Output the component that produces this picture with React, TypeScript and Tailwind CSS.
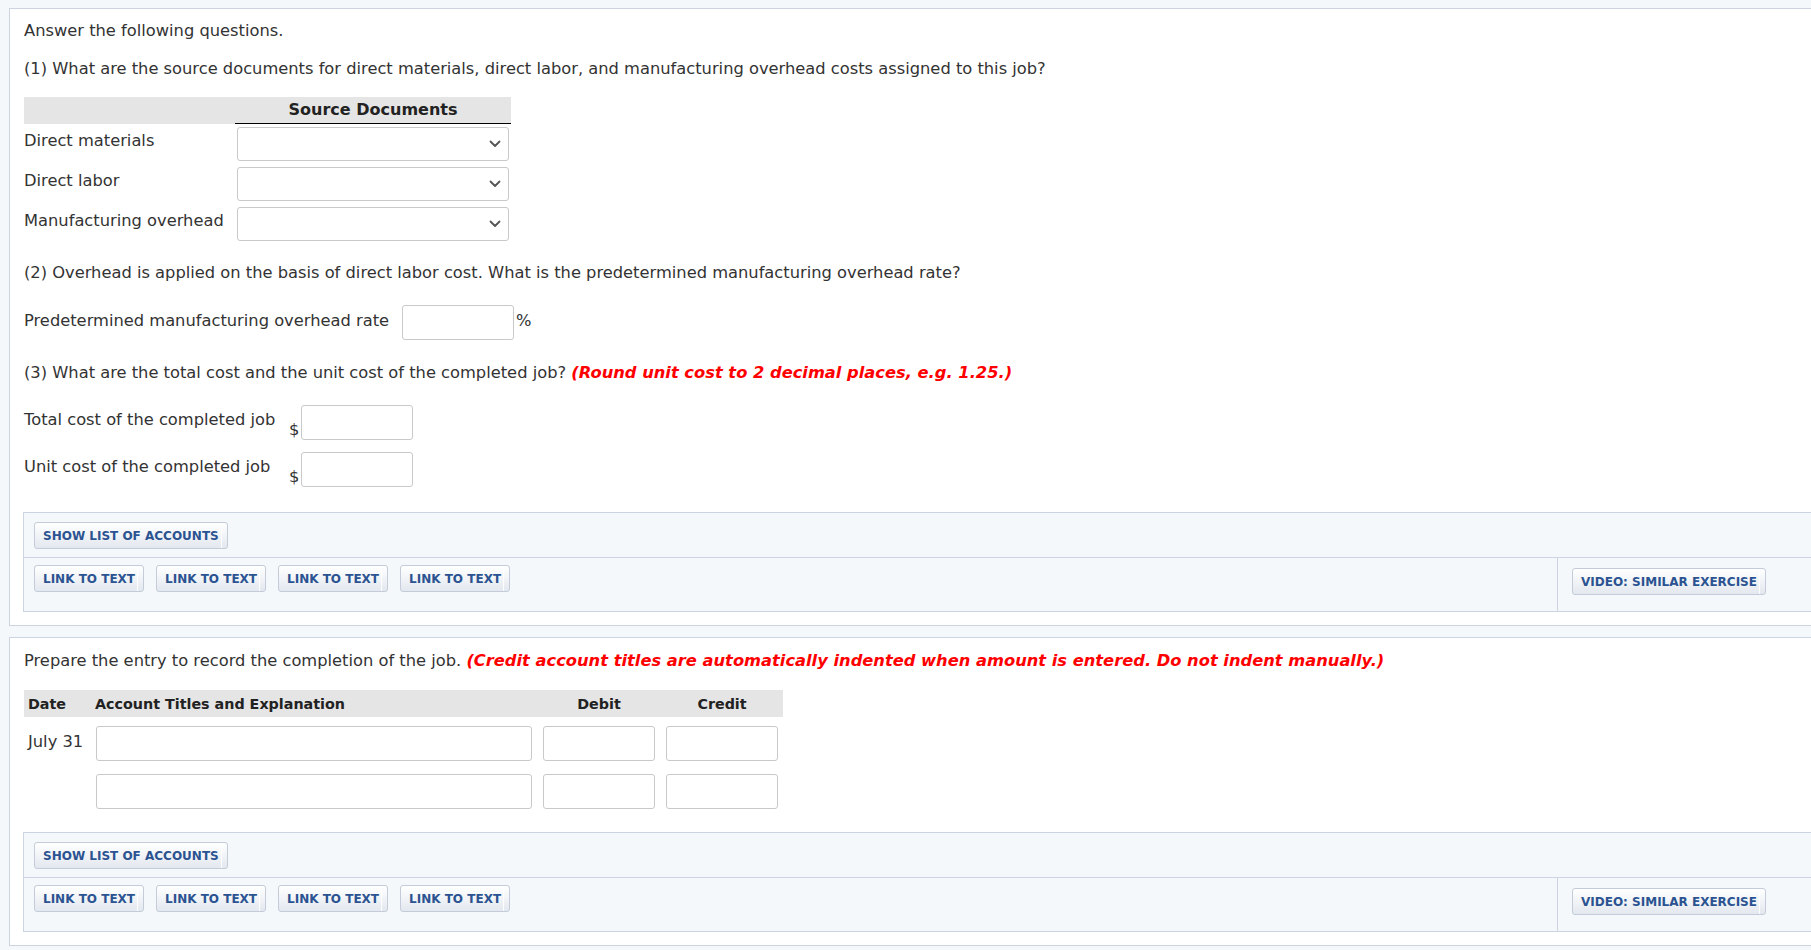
import React from 'react';

const Btn: React.FC<{ label: string }> = ({ label }) => (
  <button
    type="button"
    className="relative h-[27px] shrink-0 rounded-[3px] border border-[#c3ccd8] bg-linear-to-b from-white to-[#e3e8ef] px-[8px] text-[12px] font-bold uppercase leading-none text-[#2b5391]"
  >
    {label}
    <span className="absolute bottom-0 right-[5px] top-0 w-px bg-white/90" />
  </button>
);

const Toolbar: React.FC = () => (
  <div className="ml-[-1px] border border-[#cbd4e0] bg-[#f5f8fb]">
    <div className="h-[44px] pl-[10px] pt-[9px]">
      <Btn label="Show List of Accounts" />
    </div>
    <div className="flex h-[54px] border-t border-[#cbd4e0]">
      <div className="flex w-[1533px] gap-[12px] pl-[10px] pt-[7px]">
        <Btn label="Link to Text" />
        <Btn label="Link to Text" />
        <Btn label="Link to Text" />
        <Btn label="Link to Text" />
      </div>
      <div className="border-l border-[#cbd4e0] pl-[14px] pt-[10px]">
        <Btn label="Video: Similar Exercise" />
      </div>
    </div>
  </div>
);

const Chevron = () => (
  <svg width="12" height="8" viewBox="0 0 12 8" fill="none">
    <path d="M1.5 1.5 L6 6 L10.5 1.5" stroke="#555" strokeWidth="1.8" strokeLinecap="round" strokeLinejoin="round" />
  </svg>
);

const SelectBox: React.FC = () => (
  <div className="flex h-[34px] w-[272px] items-center justify-end rounded-[3px] border border-[#c9c9c9] bg-white pr-[7px]">
    <Chevron />
  </div>
);

const Input: React.FC<{ className: string }> = ({ className }) => (
  <input type="text" className={`rounded-[3px] border border-[#c9c9c9] bg-white outline-none ${className}`} />
);

const sourceRows = ['Direct materials', 'Direct labor', 'Manufacturing overhead'];

export default function App() {
  return (
    <div className="h-[950px] w-[1811px] overflow-hidden bg-[#f5f8fb] pt-[8px] font-['DejaVu_Sans',Verdana,sans-serif] text-[16.3px] leading-[20px] text-[#333]">
      {/* part 1 */}
      <div className="ml-[9px] w-[1840px] border border-[#cbd4e0] bg-white pb-[13px] pl-[14px] pt-[12px]">
        <p>Answer the following questions.</p>
        <p className="mt-[18px]">
          (1) What are the source documents for direct materials, direct labor, and manufacturing overhead costs assigned to this job?
        </p>

        <div className="mt-[18px]">
          <div className="flex h-[27px] w-[487px] bg-[#e5e5e5]">
            <div className="w-[211px]" />
            <div className="w-[276px] border-b border-black text-center text-[16px] font-bold leading-[26px] text-[#222]">
              Source Documents
            </div>
          </div>
          {sourceRows.map((r, i) => (
            <div key={r} className={`flex ${i === 0 ? 'mt-[3px]' : 'mt-[6px]'}`}>
              <div className="w-[213px] pt-[4px]">{r}</div>
              <SelectBox />
            </div>
          ))}
        </div>

        <p className="mt-[22px]">
          (2) Overhead is applied on the basis of direct labor cost. What is the predetermined manufacturing overhead rate?
        </p>
        <div className="mt-[22px] flex items-center">
          <div className="w-[378px] pb-[4px]">Predetermined manufacturing overhead rate</div>
          <Input className="h-[35px] w-[112px]" />
          <span className="ml-[2px] pb-[4px]">%</span>
        </div>

        <p className="mt-[23px]">
          (3) What are the total cost and the unit cost of the completed job?{' '}
          <span className="font-bold italic text-[#ff0000]">(Round unit cost to 2 decimal places, e.g. 1.25.)</span>
        </p>
        <div className="mt-[22px] flex">
          <div className="w-[265px] pt-[5px]">Total cost of the completed job</div>
          <span className="w-[12px] self-end">$</span>
          <Input className="h-[35px] w-[112px]" />
        </div>
        <div className="mt-[12px] flex">
          <div className="w-[265px] pt-[5px]">Unit cost of the completed job</div>
          <span className="w-[12px] self-end">$</span>
          <Input className="h-[35px] w-[112px]" />
        </div>

        <div className="mt-[25px]">
          <Toolbar />
        </div>
      </div>

      {/* part 2 */}
      <div className="ml-[9px] mt-[11px] w-[1840px] border border-[#cbd4e0] bg-white pb-[13px] pl-[14px] pt-[13px]">
        <p>
          Prepare the entry to record the completion of the job.{' '}
          <span className="font-bold italic text-[#ff0000]">
            (Credit account titles are automatically indented when amount is entered. Do not indent manually.)
          </span>
        </p>

        <div className="mt-[19px]">
          <div className="flex h-[27px] w-[759px] items-center bg-[#e5e5e5] text-[14.3px] font-bold text-[#222]">
            <div className="w-[70px] pl-[4px]">Date</div>
            <div className="w-[442px] pl-[1px]">Account Titles and Explanation</div>
            <div className="w-[123px] pl-[7px]">
              <div className="w-[112px] text-center">Debit</div>
            </div>
            <div className="w-[124px] pl-[7px]">
              <div className="w-[112px] text-center">Credit</div>
            </div>
          </div>
          {['July 31', ''].map((d, i) => (
            <div key={i} className={`flex ${i === 0 ? 'mt-[9px]' : 'mt-[13px]'}`}>
              <div className="w-[72px] pl-[4px] pt-[6px]">{d}</div>
              <Input className="h-[35px] w-[436px]" />
              <Input className="ml-[11px] h-[35px] w-[112px]" />
              <Input className="ml-[11px] h-[35px] w-[112px]" />
            </div>
          ))}
        </div>

        <div className="mt-[23px]">
          <Toolbar />
        </div>
      </div>
    </div>
  );
}
